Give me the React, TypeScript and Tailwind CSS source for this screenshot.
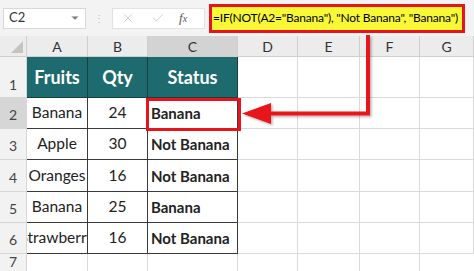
import { ChevronDown, Check, X } from "lucide-react";

const cols = ["A", "B", "C", "D", "E", "F", "G"];

const rows = [
  { fruit: "Banana", qty: "24", status: "Banana" },
  { fruit: "Apple", qty: "30", status: "Not Banana" },
  { fruit: "Oranges", qty: "16", status: "Not Banana" },
  { fruit: "Banana", qty: "25", status: "Banana" },
  { fruit: "Strawberry", qty: "16", status: "Not Banana" },
];

const font = { fontFamily: "Lato, 'Liberation Sans', sans-serif" };

function EmptyCells({ n }: { n: number }) {
  return (
    <>
      {Array.from({ length: n }).map((_, i) => (
        <div key={i} className="border-r border-b border-[#dadada] bg-white" />
      ))}
    </>
  );
}

export default function App() {
  return (
    <div className="relative w-[474px] h-[271px] overflow-hidden bg-white text-[#222]" style={font}>
      {/* formula bar */}
      <div className="h-[36px] bg-[#f3f3f3] flex items-center pl-[3px]">
        <div className="w-[83px] h-[21px] bg-white border border-[#d8d8d8] flex items-center justify-between pl-[5px] pr-[4px] text-[13px] text-[#333]">
          <span>C2</span>
          <ChevronDown className="w-3 h-3 text-[#777]" fill="#777" strokeWidth={1} />
        </div>
        <div className="w-[26px] flex justify-center text-[#bbb] text-[10px] leading-none">⋮</div>
        <div className="w-[93px] h-[21px] bg-white border border-[#e2e2e2] flex items-center text-[#b8b8b8]">
          <X className="w-[14px] h-[14px] ml-[8px]" strokeWidth={1.2} />
          <Check className="w-[14px] h-[14px] ml-[16px]" strokeWidth={1.2} />
          <span
            className="ml-[14px] italic text-[13px] text-[#555]"
            style={{ fontFamily: "'Liberation Serif', serif" }}
          >
            f<span className="text-[10px]">x</span>
          </span>
        </div>
        <div className="ml-[4px] w-[256px] h-[29px] bg-[#f8f836] border-[3px] border-[#e8141c] flex items-center pl-[1px] text-[12px] tracking-[-0.2px] text-black whitespace-nowrap">
          =IF(NOT(A2="Banana"), "Not Banana", "Banana")
        </div>
      </div>

      {/* sheet */}
      <div className="grid grid-cols-[27px_61px_60px_90px_60px_62px_60px_1fr] grid-rows-[21px_41px_31px_31px_32px_31px_31px_1fr] h-[235px]">
        {/* corner */}
        <div className="bg-[#ececec] border-r border-b border-[#cfcfcf] relative">
          <div className="absolute right-[3px] bottom-[3px] w-0 h-0 border-l-[12px] border-l-transparent border-b-[12px] border-b-[#c4c4c4]" />
        </div>
        {cols.map((c) => (
          <div
            key={c}
            className={`flex items-center justify-center text-[14px] text-[#333] border-r border-b border-[#cfcfcf] ${
              c === "C" ? "bg-[#d3d3d3]" : "bg-[#ececec]"
            }`}
          >
            {c}
          </div>
        ))}

        {/* row 1 */}
        <div className="bg-[#f2f2f2] border-r border-b border-[#d6d6d6] flex items-end justify-center pb-[2px] text-[14px] text-[#444]">1</div>
        <div className="bg-[#1d6b6e] border-r border-b border-[#1a3f40] flex items-center justify-center text-white font-bold text-[18px]">Fruits</div>
        <div className="bg-[#1d6b6e] border-r border-b border-[#1a3f40] flex items-center justify-center text-white font-bold text-[18px]">Qty</div>
        <div className="bg-[#1d6b6e] border-r border-b border-[#1a3f40] flex items-center justify-center text-white font-bold text-[18px]">Status</div>
        <EmptyCells n={4} />

        {rows.map((r, i) => (
          <div key={i} className="contents">
            <div
              className={`border-r border-b border-[#d6d6d6] flex items-end justify-center pb-[3px] text-[14px] text-[#444] ${
                i === 0 ? "bg-[#d6d6d6]" : "bg-[#f2f2f2]"
              }`}
            >
              {i + 2}
            </div>
            <div className="bg-white border-r border-b border-[#3a3a3a] flex items-end justify-center pb-[4px] text-[15.5px] overflow-hidden whitespace-nowrap">
              {r.fruit}
            </div>
            <div className="bg-white border-r border-b border-[#3a3a3a] flex items-end justify-center pb-[4px] text-[15.5px]">
              {r.qty}
            </div>
            <div className="bg-white border-r border-b border-[#3a3a3a] flex items-end pl-[3px] pb-[4px] text-[15px] font-bold whitespace-nowrap overflow-hidden">
              {r.status}
            </div>
            <EmptyCells n={4} />
          </div>
        ))}

        <div className="bg-[#f2f2f2] border-r border-[#d6d6d6] flex items-start justify-center text-[14px] text-[#444] leading-[16px]">7</div>
        <div className="border-r border-[#dadada]" />
        <div className="border-r border-[#dadada]" />
        <div className="border-r border-[#dadada]" />
        <div className="border-r border-[#dadada]" />
        <div className="border-r border-[#dadada]" />
        <div className="border-r border-[#dadada]" />
        <div />
      </div>

      {/* highlight on C2 */}
      <div className="absolute left-[146px] top-[98px] w-[95px] h-[33px] border-[3px] border-[#e8141c]" />

      {/* arrow */}
      <svg className="absolute inset-0 pointer-events-none" width="474" height="271" viewBox="0 0 474 271">
        <defs>
          <filter id="sh" x="-10%" y="-10%" width="130%" height="130%">
            <feDropShadow dx="1.5" dy="1.5" stdDeviation="1" floodColor="#000" floodOpacity="0.3" />
          </filter>
        </defs>
        <g filter="url(#sh)" fill="#e8141c" stroke="#e8141c">
          <path d="M368 35 V113.5 H268" fill="none" strokeWidth="4" />
          <polygon points="242,113.5 271,103 271,124" stroke="none" />
        </g>
      </svg>
    </div>
  );
}
